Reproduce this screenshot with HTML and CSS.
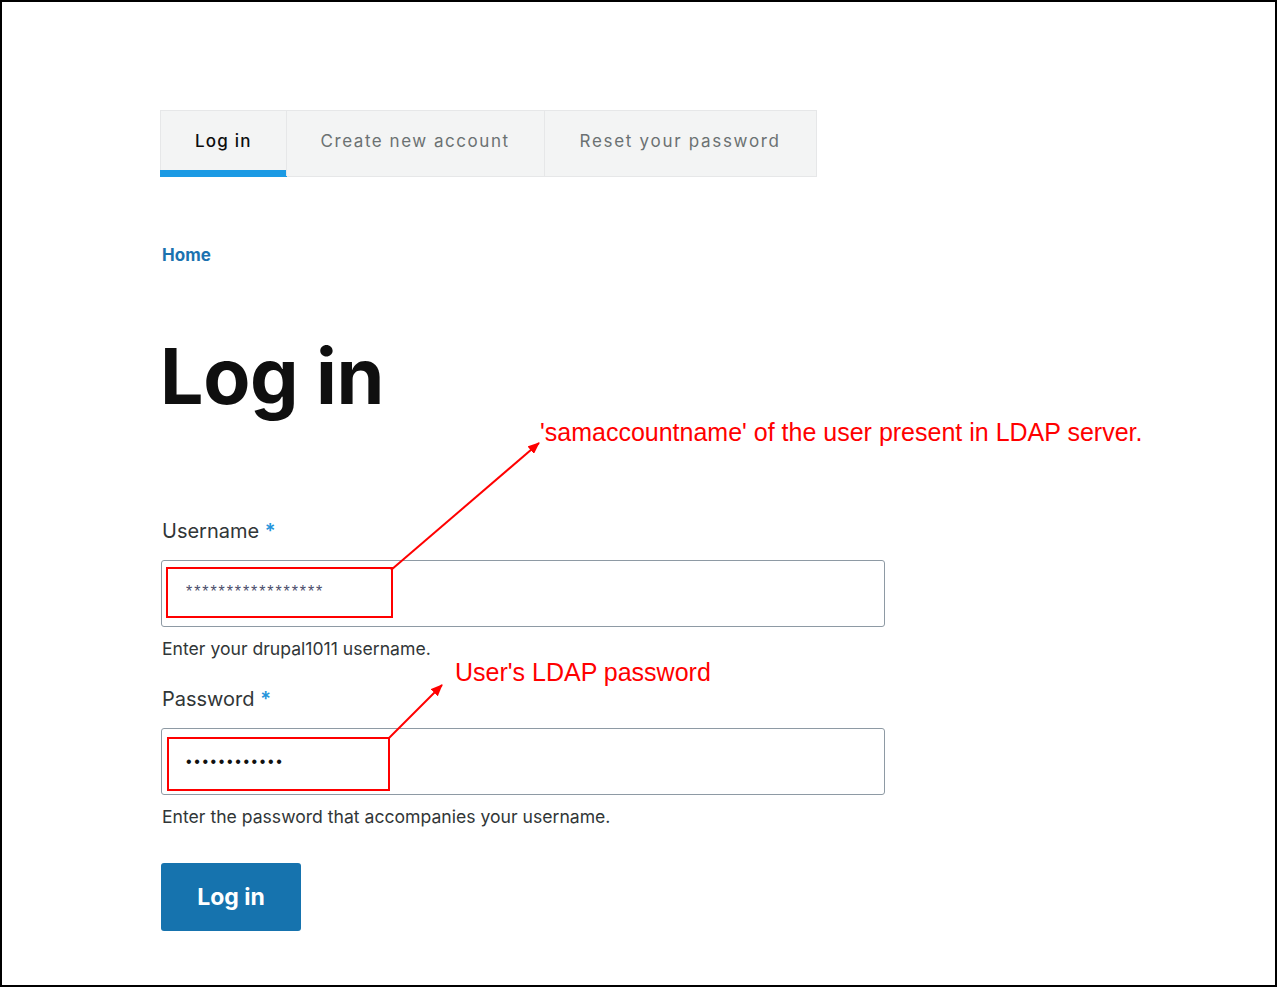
FILE: index.html
```html
<!DOCTYPE html>
<html lang="en">
<head>
<meta charset="utf-8">
<title>Log in</title>
<link rel="stylesheet" href="styles.css">
</head>
<body>
<div class="frame">
  <div class="page">
    <nav class="tabs">
      <a class="tab active" href="#">Log in</a>
      <a class="tab" href="#">Create new account</a>
      <a class="tab tab-last" href="#">Reset your password</a>
    </nav>
    <div class="breadcrumb"><a href="#">Home</a></div>
    <h1 class="title">Log in</h1>
    <form class="login-form">
      <div class="field">
        <label class="label" for="name">Username <span class="req">*</span></label>
        <input class="input input-name" id="name" type="text" value="*****************">
        <div class="desc">Enter your drupal1011 username.</div>
      </div>
      <div class="field">
        <label class="label" for="pass">Password <span class="req">*</span></label>
        <input class="input input-pass" id="pass" type="password" value="aaaaaaaaaaaa">
        <div class="desc">Enter the password that accompanies your username.</div>
      </div>
      <button class="btn" type="button">Log in</button>
    </form>
  </div>
  <div class="annotations">
    <svg class="anno-svg" width="1277" height="987" viewBox="0 0 1277 987">
      <defs>
        <marker id="ah" markerWidth="12" markerHeight="10" refX="11" refY="5" orient="auto" markerUnits="userSpaceOnUse">
          <path d="M0,0 L12,5 L0,10 Z" fill="#ff0000"/>
        </marker>
      </defs>
      <rect x="167" y="568" width="225" height="49" fill="none" stroke="#ff0000" stroke-width="2"/>
      <line x1="391" y1="570" x2="539" y2="443" stroke="#ff0000" stroke-width="2" marker-end="url(#ah)"/>
      <rect x="168" y="738" width="221" height="52" fill="none" stroke="#ff0000" stroke-width="2"/>
      <line x1="388" y1="739" x2="442" y2="685" stroke="#ff0000" stroke-width="2" marker-end="url(#ah)"/>
    </svg>
    <div class="note note-1">'samaccountname' of the user present in LDAP server.</div>
    <div class="note note-2">User's LDAP password</div>
  </div>
</div>
</body>
</html>
```

FILE: styles.css
```css
html, body {
  margin: 0;
  padding: 0;
  background: #ffffff;
}

.frame {
  position: relative;
  width: 1277px;
  height: 987px;
  box-sizing: border-box;
  border: 2px solid #000000;
  font-family: "Inter", "Noto Sans", sans-serif;
  color: #313637;
  overflow: hidden;
}

.page {
  padding: 108px 0 0 158px;
}

.tabs {
  display: inline-flex;
  background: #f3f4f4;
  border: 1px solid #e6e7e8;
  box-sizing: border-box;
  height: 67px;
}

.tab {
  position: relative;
  display: flex;
  align-items: center;
  box-sizing: border-box;
  padding: 0 34px 5px 34px;
  height: 65px;
  font-size: 17px;
  letter-spacing: 0.09em;
  color: #6b7172;
  text-decoration: none;
  border-left: 1px solid #e6e7e8;
}

.tab-last {
  padding: 0 35px 5px 35px;
  letter-spacing: 0.1em;
}

.tab:first-child {
  border-left: none;
  padding: 0 34px 5px 34px;
}

.tab.active {
  color: #0d0d0d;
  font-weight: 500;
  letter-spacing: 0.07em;
}

.tab.active::after {
  content: "";
  position: absolute;
  left: -1px;
  right: -1px;
  bottom: -1px;
  height: 7px;
  background: #1b9ae4;
}

.breadcrumb {
  margin-top: 68px;
  padding-left: 2px;
  font-size: 17px;
  font-weight: 700;
  line-height: 20px;
}

.breadcrumb a {
  color: #1b72b0;
  text-decoration: none;
}

.title {
  margin: 66px 0 0 0;
  font-size: 77px;
  font-weight: 700;
  line-height: 90px;
  letter-spacing: -0.005em;
  color: #0f0f0f;
}

.login-form {
  margin-top: 98px;
}

.field {
  display: flex;
  flex-direction: column;
  align-items: flex-start;
}

.field + .field {
  margin-top: 28px;
}

.label {
  font-size: 20px;
  line-height: 24px;
  padding-left: 2px;
  color: #313637;
}

.req {
  color: #2494db;
  font-weight: 600;
}

.input {
  margin-top: 17px;
  margin-left: 1px;
  width: 724px;
  height: 67px;
  box-sizing: border-box;
  border: 1px solid #8e9aa4;
  border-radius: 3px;
  padding: 0 0 0 24px;
  font-family: "Liberation Sans", sans-serif;
  color: #333;
  background: #fff;
  outline: none;
}

.input-name {
  font-size: 16px;
  letter-spacing: 1.9px;
  padding-bottom: 4px;
  color: #4a4d6a;
}

.input-pass {
  font-size: 16px;
  letter-spacing: 2.6px;
  color: #111;
}

.desc {
  margin-top: 12px;
  padding-left: 2px;
  font-size: 17.6px;
  line-height: 20px;
  color: #313637;
}

.btn {
  margin-top: 36px;
  margin-left: 1px;
  width: 140px;
  height: 68px;
  border: none;
  border-radius: 3px;
  background: #1673ae;
  color: #ffffff;
  font-family: "Inter", "Noto Sans", sans-serif;
  font-size: 23px;
  font-weight: 700;
  cursor: pointer;
}

.annotations {
  position: absolute;
  left: -2px;
  top: -2px;
  width: 1277px;
  height: 987px;
  pointer-events: none;
}

.anno-svg {
  position: absolute;
  left: 0;
  top: 0;
}

.note {
  position: absolute;
  font-family: "Liberation Sans", "Arial", sans-serif;
  color: #ff0000;
  white-space: nowrap;
  line-height: 30px;
}

.note-1 {
  left: 540px;
  top: 417px;
  font-size: 25px;
}

.note-2 {
  left: 455px;
  top: 657px;
  font-size: 25px;
}
```
